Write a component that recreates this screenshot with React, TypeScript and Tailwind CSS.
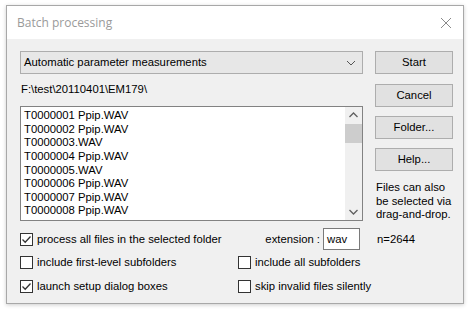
import React from "react";

const files = [
  "T0000001 Ppip.WAV",
  "T0000002 Ppip.WAV",
  "T0000003.WAV",
  "T0000004 Ppip.WAV",
  "T0000005.WAV",
  "T0000006 Ppip.WAV",
  "T0000007 Ppip.WAV",
  "T0000008 Ppip.WAV",
];

const Check = ({ checked }: { checked?: boolean }) => (
  <div className="w-[13px] h-[13px] border border-[#333] bg-white flex items-center justify-center shrink-0">
    {checked && (
      <svg width="11" height="11" viewBox="0 0 11 11">
        <path d="M1.5 5.5 L4.2 8.2 L9.5 2.5" fill="none" stroke="#333" strokeWidth="1.3" />
      </svg>
    )}
  </div>
);

const Btn = ({ label }: { label: string }) => (
  <div className="h-[23px] border border-[#adadad] bg-[#e1e1e1] flex items-center justify-center">
    {label}
  </div>
);

const App = () => {
  return (
    <div
      className="w-[474px] h-[313px] bg-white pt-[5px] pl-[6px] text-[11.3px] text-black leading-none"
      style={{ fontFamily: '"Liberation Sans", Arial, sans-serif' }}
    >
      <div className="w-[458px] h-[299px] border border-[#a8a8a8] shadow-[0_1px_4px_rgba(0,0,0,0.2)] flex flex-col">
        {/* title bar */}
        <div className="h-[33px] bg-white flex items-center justify-between pl-[10px] pr-[11px]">
          <span className="text-[12px] text-[#9a9a9a]" style={{ fontFamily: '"Open Sans", "Noto Sans", sans-serif' }}>
            Batch processing
          </span>
          <svg width="12" height="12" viewBox="0 0 12 12">
            <path d="M1 1 L11 11 M11 1 L1 11" stroke="#8a8a8a" strokeWidth="1" />
          </svg>
        </div>

        {/* body */}
        <div className="flex-1 bg-[#f0f0f0] pt-[12px] pl-[13px]">
          <div className="flex gap-[12px]">
            {/* left column */}
            <div className="w-[343px] flex flex-col">
              <div className="h-[23px] border border-[#adadad] bg-[#e7e7e7] flex items-center justify-between pl-[3px] pr-[6px]">
                <span>Automatic parameter measurements</span>
                <svg width="10" height="6" viewBox="0 0 10 6">
                  <path d="M1 1 L5 5 L9 1" fill="none" stroke="#555" strokeWidth="1" />
                </svg>
              </div>
              <div className="h-[32px] flex items-center pl-[1px]">F:\test\20110401\EM179\</div>
              <div className="h-[115px] border border-[#828282] bg-white flex">
                <div className="flex-1 pl-[3px] pt-[2px] flex flex-col">
                  {files.map((f) => (
                    <div key={f} className="h-[13.6px] flex items-center">
                      {f}
                    </div>
                  ))}
                </div>
                <div className="w-[17px] bg-[#f0f0f0] flex flex-col items-center">
                  <svg width="17" height="17" viewBox="0 0 17 17">
                    <path d="M4.5 10 L8.5 6 L12.5 10" fill="none" stroke="#606060" strokeWidth="1.3" />
                  </svg>
                  <div className="w-[17px] h-[19px] bg-[#cdcdcd]" />
                  <div className="flex-1" />
                  <svg width="17" height="17" viewBox="0 0 17 17">
                    <path d="M4.5 7 L8.5 11 L12.5 7" fill="none" stroke="#606060" strokeWidth="1.3" />
                  </svg>
                </div>
              </div>
            </div>

            {/* right column */}
            <div className="w-[78px] flex flex-col">
              <Btn label="Start" />
              <div className="h-[10px]" />
              <Btn label="Cancel" />
              <div className="h-[9px]" />
              <Btn label="Folder..." />
              <div className="h-[9px]" />
              <Btn label="Help..." />
              <div className="mt-[10px] pl-[1px] leading-[13.5px]">
                Files can also
                <br />
                be selected via
                <br />
                drag-and-drop.
              </div>
            </div>
          </div>

          {/* options */}
          <div className="mt-[6px] flex flex-col">
            <div className="h-[23.5px] flex items-center">
              <div className="w-[218px] flex items-center gap-[4px]">
                <Check checked />
                <span>process all files in the selected folder</span>
              </div>
              <div className="w-[122px] flex items-center justify-end gap-[3px]">
                <span>extension :</span>
                <div className="w-[37px] h-[22px] border border-[#7a7a7a] bg-white flex items-center pl-[3px]">wav</div>
              </div>
              <span className="ml-[17px]">n=2644</span>
            </div>
            <div className="h-[23.5px] flex items-center">
              <div className="w-[218px] flex items-center gap-[4px]">
                <Check />
                <span>include first-level subfolders</span>
              </div>
              <div className="flex items-center gap-[4px]">
                <Check />
                <span>include all subfolders</span>
              </div>
            </div>
            <div className="h-[23.5px] flex items-center">
              <div className="w-[218px] flex items-center gap-[4px]">
                <Check checked />
                <span>launch setup dialog boxes</span>
              </div>
              <div className="flex items-center gap-[4px]">
                <Check />
                <span>skip invalid files silently</span>
              </div>
            </div>
          </div>
        </div>
      </div>
    </div>
  );
};

export default App;
